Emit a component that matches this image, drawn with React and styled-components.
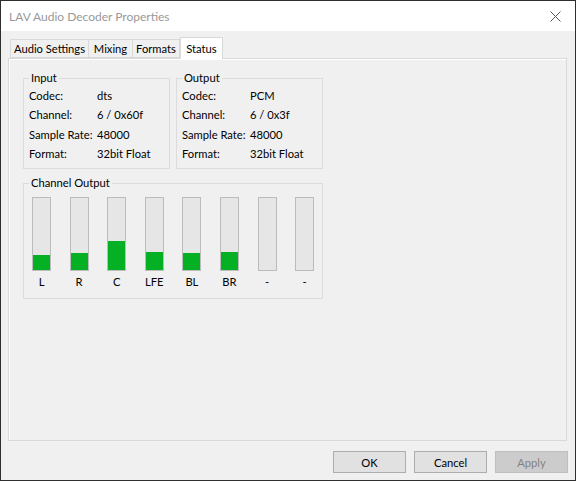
import styled, { createGlobalStyle } from "styled-components";

const GlobalStyle = createGlobalStyle`
  html, body { margin: 0; padding: 0; background: #f0f0f0; }
  body { font-family: Lato, "Liberation Sans", sans-serif; font-size: 11.2px; color: #000; }
`;

const Window = styled.div`
  width: 576px;
  height: 481px;
  box-sizing: border-box;
  border: 1px solid #2f2f2f;
  display: flex;
  flex-direction: column;
  background: #f0f0f0;
`;

const TitleBar = styled.div`
  height: 30px;
  flex: none;
  background: #fff;
  display: flex;
  align-items: center;
  justify-content: space-between;
  padding: 0 14px 0 8px;
  color: #999;
`;

const Title = styled.span`
  font-size: 12px;
`;

const Body = styled.div`
  flex: 1;
  display: flex;
  flex-direction: column;
  padding: 6px 8px 0 7px;
`;

const TabStrip = styled.div`
  display: flex;
  align-items: flex-end;
  height: 21px;
  padding-left: 2px;
  position: relative;
  z-index: 1;
`;

const Tab = styled.div`
  height: ${(p) => (p.$active ? "22px" : "19px")};
  width: ${(p) => p.$width}px;
  box-sizing: border-box;
  display: flex;
  align-items: center;
  justify-content: center;
  white-space: nowrap;
  border: 1px solid #d9d9d9;
  border-bottom: ${(p) => (p.$active ? "none" : "1px solid #d9d9d9")};
  border-left: ${(p) => (p.$first || p.$active ? "1px solid #d9d9d9" : "none")};
  background: ${(p) => (p.$active ? "#fff" : "#f0f0f0")};
  margin-bottom: ${(p) => (p.$active ? "-1px" : "0")};
`;

const Panel = styled.div`
  height: 383px;
  box-sizing: border-box;
  border: 1px solid #d9d9d9;
  background: #f0f0f0;
  box-shadow: inset 1px 1px 0 #fff;
  padding: 12px 0 0 14px;
  display: flex;
  flex-direction: column;
  gap: 7px;
`;

const GroupRow = styled.div`
  display: flex;
  gap: 6px;
`;

const Group = styled.fieldset`
  margin: 0;
  width: ${(p) => p.$width}px;
  height: ${(p) => p.$height}px;
  box-sizing: border-box;
  border: 1px solid #dcdcdc;
  padding: 0 0 0 5px;
  min-width: 0;
`;

const Legend = styled.legend`
  padding: 0 2px;
  margin-left: 0;
  line-height: 14px;
`;

const InfoGrid = styled.div`
  display: grid;
  grid-template-columns: 68px auto;
  grid-auto-rows: 19.3px;
  align-items: center;
  white-space: nowrap;
  margin-top: 1px;
`;

const Meters = styled.div`
  display: flex;
  padding: 7px 0 0 3px;
`;

const Meter = styled.div`
  flex: none;
  width: 37.6px;
  display: flex;
  flex-direction: column;
  align-items: flex-start;
`;

const MeterTrack = styled.div`
  width: 19px;
  height: 74px;
  box-sizing: border-box;
  border: 1px solid #bcbcbc;
  background: #e6e6e6;
  display: flex;
  flex-direction: column;
  justify-content: flex-end;
`;

const MeterFill = styled.div`
  background: #06b025;
`;

const MeterLabel = styled.div`
  width: 19px;
  text-align: center;
  margin-top: 4px;
  line-height: 14px;
`;

const Footer = styled.div`
  display: flex;
  justify-content: flex-end;
  gap: 8px;
  padding: 10px 0 0;
  margin-right: -1px;
`;

const Button = styled.button`
  width: 73px;
  height: 22px;
  box-sizing: border-box;
  font: inherit;
  border: 1px solid ${(p) => (p.disabled ? "#bfbfbf" : "#adadad")};
  background: ${(p) => (p.disabled ? "#cccccc" : "#e1e1e1")};
  color: ${(p) => (p.disabled ? "#838383" : "#000")};
  padding: 0;
`;

const input = [
  ["Codec:", "dts"],
  ["Channel:", "6 / 0x60f"],
  ["Sample Rate:", "48000"],
  ["Format:", "32bit Float"],
];

const output = [
  ["Codec:", "PCM"],
  ["Channel:", "6 / 0x3f"],
  ["Sample Rate:", "48000"],
  ["Format:", "32bit Float"],
];

const channels = [
  ["L", 15],
  ["R", 17],
  ["C", 29],
  ["LFE", 18],
  ["BL", 17],
  ["BR", 18],
  ["-", 0],
  ["-", 0],
];

function Info({ rows }) {
  return (
    <InfoGrid>
      {rows.map(([k, v]) => [<span key={k}>{k}</span>, <span key={k + "v"}>{v}</span>])}
    </InfoGrid>
  );
}

export default function App() {
  return (
    <>
      <GlobalStyle />
      <Window>
        <TitleBar>
          <Title>LAV Audio Decoder Properties</Title>
          <svg width="11" height="11" viewBox="0 0 11 11">
            <path d="M0.5 0.5 L10.5 10.5 M10.5 0.5 L0.5 10.5" stroke="#555" strokeWidth="1" />
          </svg>
        </TitleBar>
        <Body>
          <TabStrip>
            <Tab $first $width={79}>Audio Settings</Tab>
            <Tab $width={44}>Mixing</Tab>
            <Tab $width={47}>Formats</Tab>
            <Tab $active $width={43}>Status</Tab>
          </TabStrip>
          <Panel>
            <GroupRow>
              <Group $width={147} $height={98}>
                <Legend>Input</Legend>
                <Info rows={input} />
              </Group>
              <Group $width={147} $height={98}>
                <Legend>Output</Legend>
                <Info rows={output} />
              </Group>
            </GroupRow>
            <Group $width={300} $height={123}>
              <Legend>Channel Output</Legend>
              <Meters>
                {channels.map(([name, level], i) => (
                  <Meter key={i}>
                    <MeterTrack>
                      <MeterFill style={{ height: level }} />
                    </MeterTrack>
                    <MeterLabel>{name}</MeterLabel>
                  </Meter>
                ))}
              </Meters>
            </Group>
          </Panel>
          <Footer>
            <Button>OK</Button>
            <Button>Cancel</Button>
            <Button disabled>Apply</Button>
          </Footer>
        </Body>
      </Window>
    </>
  );
}
